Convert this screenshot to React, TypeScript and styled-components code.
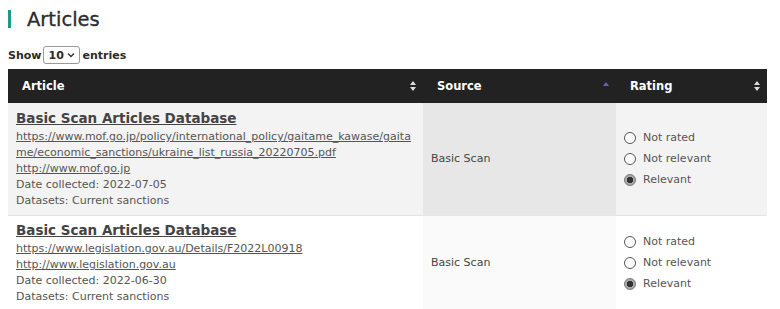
import React from 'react';
import styled, { createGlobalStyle } from 'styled-components';

const GlobalStyle = createGlobalStyle`
  body {
    margin: 0;
    background: #fff;
    font-family: "DejaVu Sans", "Noto Sans", sans-serif;
    color: #555;
  }
`;

const Page = styled.div`
  padding: 6px 12px 0 8px;
`;

const Heading = styled.h1`
  display: flex;
  align-items: center;
  margin: 0;
  height: 26px;
  font-size: 19.5px;
  font-weight: 500;
  color: #2b2b2b;
  -webkit-text-stroke: 0.3px #2b2b2b;
  &::before {
    content: '';
    width: 3px;
    height: 18px;
    background: #1b9a89;
    margin-right: 16px;
  }
`;

const LengthRow = styled.div`
  display: flex;
  align-items: center;
  gap: 2px;
  margin-top: 14px;
  font-size: 11px;
  font-weight: bold;
  color: #2b2b2b;
`;

const SelectBox = styled.div`
  display: flex;
  align-items: center;
  justify-content: space-between;
  width: 37px;
  height: 18px;
  box-sizing: border-box;
  padding: 0 4px;
  border: 1px solid #999;
  border-radius: 3px;
  font-size: 11px;
`;

const Table = styled.div`
  margin-top: 5px;
  display: grid;
  grid-template-columns: 415px 193px 151px;
`;

const HeadCell = styled.div`
  display: flex;
  align-items: center;
  justify-content: space-between;
  height: 34px;
  padding: 0 6px 0 14px;
  background: #222;
  color: #fff;
  font-size: 11.5px;
  font-weight: bold;
`;

const Cell = styled.div<{ $bg: string; $divider?: boolean }>`
  background: ${(p) => p.$bg};
  padding: 4px 8px 6px;
  display: flex;
  flex-direction: column;
  justify-content: center;
  font-size: 11px;
  border-top: 1px solid ${(p) => (p.$divider ? '#e4e4e4' : 'transparent')};
`;

const ArticleTitle = styled.a`
  font-size: 13.5px;
  font-weight: bold;
  color: #444;
  text-decoration: underline;
  line-height: 20px;
  margin-bottom: 1px;
`;

const Link = styled.a`
  color: #555;
  text-decoration: underline;
  line-height: 16px;
  word-break: break-all;
`;

const Meta = styled.div`
  line-height: 16px;
  color: #555;
`;

const Source = styled.div`
  color: #444;
`;

const RadioLabel = styled.label`
  display: flex;
  align-items: center;
  gap: 7px;
  height: 21px;
  color: #555;
`;

const Radio = styled.span<{ $on?: boolean }>`
  width: 10px;
  height: 10px;
  border-radius: 50%;
  border: 1px solid ${(p) => (p.$on ? '#777' : '#555')};
  background: ${(p) => (p.$on ? 'radial-gradient(circle, #333 0 3px, #aaa 3.5px)' : '#fff')};
`;

function SortIcon({ active }: { active?: boolean }) {
  if (active) {
    return (
      <svg width="8" height="10" viewBox="0 0 8 10">
        <path d="M4 1 L7 5 L1 5 Z" fill="#6c62b6" />
      </svg>
    );
  }
  return (
    <svg width="8" height="12" viewBox="0 0 8 12">
      <path d="M4 1 L7 5 L1 5 Z" fill="#ddd" />
      <path d="M4 11 L7 7 L1 7 Z" fill="#ddd" />
    </svg>
  );
}

const rows = [
  {
    urls: [
      'https://www.mof.go.jp/policy/international_policy/gaitame_kawase/gaitame/economic_sanctions/ukraine_list_russia_20220705.pdf',
      'http://www.mof.go.jp',
    ],
    date: '2022-07-05',
  },
  {
    urls: ['https://www.legislation.gov.au/Details/F2022L00918', 'http://www.legislation.gov.au'],
    date: '2022-06-30',
  },
];

export default function App() {
  return (
    <Page>
      <GlobalStyle />
      <Heading>Articles</Heading>
      <LengthRow>
        Show
        <SelectBox>
          10
          <svg width="8" height="6" viewBox="0 0 8 6">
            <path d="M1 1.5 L4 4.5 L7 1.5" stroke="#333" strokeWidth="1.4" fill="none" />
          </svg>
        </SelectBox>
        entries
      </LengthRow>
      <Table>
        <HeadCell>
          Article <SortIcon />
        </HeadCell>
        <HeadCell>
          Source <SortIcon active />
        </HeadCell>
        <HeadCell>
          Rating <SortIcon />
        </HeadCell>
        {rows.map((r, i) => {
          const odd = i % 2 === 0;
          return (
            <React.Fragment key={i}>
              <Cell $bg={odd ? '#f3f3f3' : '#fff'} $divider={!odd}>
                <ArticleTitle>Basic Scan Articles Database</ArticleTitle>
                {r.urls.map((u) => (
                  <Link key={u}>{u}</Link>
                ))}
                <Meta>Date collected: {r.date}</Meta>
                <Meta>Datasets: Current sanctions</Meta>
              </Cell>
              <Cell $bg={odd ? '#e7e7e7' : '#fafafa'} $divider={!odd}>
                <Source>Basic Scan</Source>
              </Cell>
              <Cell $bg={odd ? '#f3f3f3' : '#fff'} $divider={!odd}>
                <RadioLabel>
                  <Radio /> Not rated
                </RadioLabel>
                <RadioLabel>
                  <Radio /> Not relevant
                </RadioLabel>
                <RadioLabel>
                  <Radio $on /> Relevant
                </RadioLabel>
              </Cell>
            </React.Fragment>
          );
        })}
      </Table>
    </Page>
  );
}
